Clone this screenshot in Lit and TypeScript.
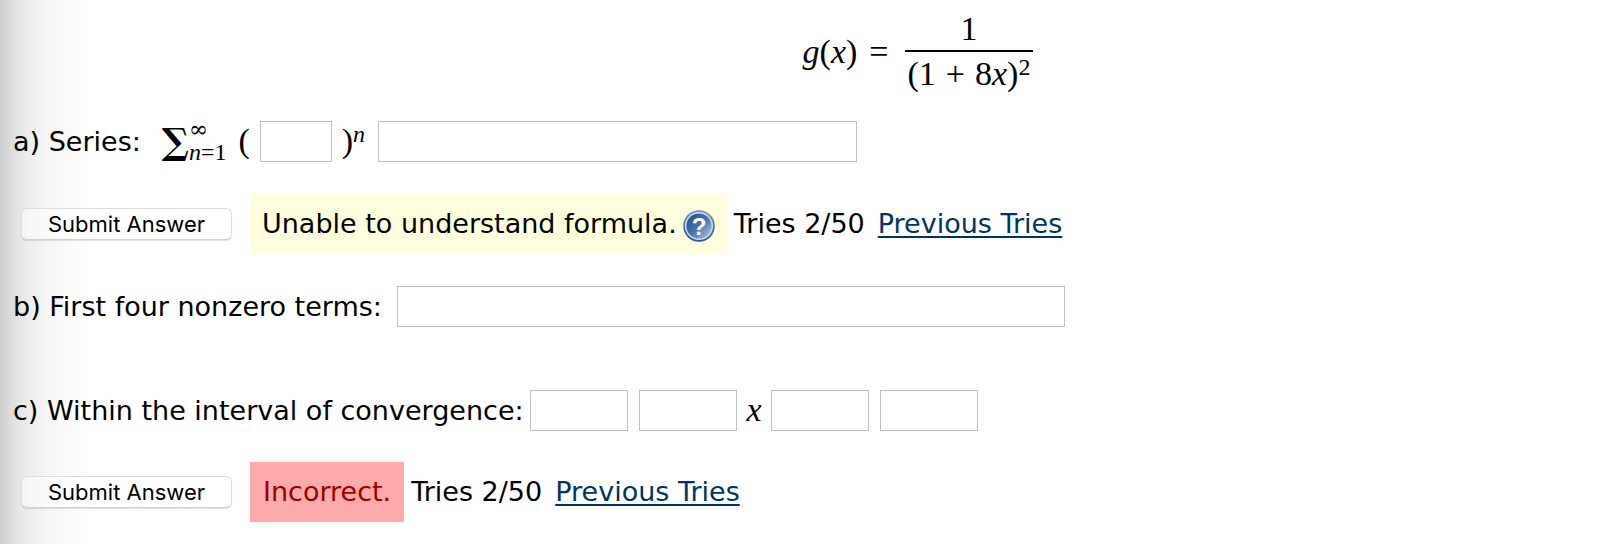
import { LitElement, html, css } from "lit";
import { customElement, property } from "lit/decorators.js";

@customElement("help-icon")
class HelpIcon extends LitElement {
  static styles = css`
    :host { display: block; }
    .link { display: block; width: 32px; height: 32px; }
    .mark { font: bold 24px "Liberation Sans", sans-serif; fill: #fff; text-anchor: middle; }
  `;
  render() {
    return html`<a class="link" href="#help" aria-label="Help">
      <svg width="32" height="32" viewBox="0 0 32 32" aria-hidden="true">
        <defs>
          <linearGradient id="disc" x1="0" y1="0" x2="1" y2="1">
            <stop offset="0.15" stop-color="#2a5596" />
            <stop offset="0.5" stop-color="#4a73b0" />
            <stop offset="0.9" stop-color="#9db9de" />
          </linearGradient>
          <linearGradient id="rim" x1="0" y1="0" x2="0" y2="1">
            <stop offset="0" stop-color="#7690b8" />
            <stop offset="1" stop-color="#2f5797" />
          </linearGradient>
        </defs>
        <circle cx="16" cy="16" r="15.8" fill="url(#rim)" />
        <circle cx="16" cy="16" r="14" fill="#d3dfef" />
        <circle cx="16" cy="16" r="12.6" fill="url(#disc)" />
        <text class="mark" x="16" y="24.5">?</text>
      </svg>
    </a>`;
  }
}

@customElement("answer-status")
class AnswerStatus extends LitElement {
  @property() kind = "warning";
  @property() message = "";

  static styles = css`
    :host { display: flex; align-items: center; }
    .submit {
      width: 211px;
      height: 32px;
      margin: 0 18px 0 8px;
      padding: 0;
      border: 1px solid #dcdcdc;
      border-bottom-color: #cfcfcf;
      border-radius: 6px;
      background: rgba(255, 255, 255, 0.5);
      box-shadow: 0 1px 1px rgba(0, 0, 0, 0.12);
      color: #000;
      font: 22px/28px Inter, sans-serif;
    }
    .message {
      box-sizing: border-box;
      display: flex;
      align-items: center;
      gap: 6px;
      height: 60px;
      padding: 0 12px;
      margin-right: 7px;
    }
    .warning { background: #ffffdd; }
    .warning help-icon { padding-top: 4px; }
    .incorrect { padding: 0 13px; background: #ffaaaa; color: #990000; }
    .previous {
      margin-left: 13px;
      color: #003366;
      text-decoration-thickness: 2px;
      text-underline-offset: 3px;
    }
  `;
  render() {
    return html`
      <button class="submit" type="button">Submit Answer</button>
      <div class="message ${this.kind}" role="status">
        <span>${this.message}</span>
        ${this.kind === "warning" ? html`<help-icon></help-icon>` : null}
      </div>
      <span>Tries 2/50</span>
      <a class="previous" href="#tries">Previous Tries</a>
    `;
  }
}

@customElement("app-root")
class AppRoot extends LitElement {
  static styles = css`
    :host {
      display: block;
      min-height: 100vh;
      box-sizing: border-box;
      padding: 8px 13px 22px;
      background: linear-gradient(
        to right,
        #cfcfcf 0,
        #dedede 12px,
        #ececec 27px,
        #f7f7f7 50px,
        #fdfdfd 80px,
        #fff 90px
      ) #fff;
      color: #000;
      font: 27px/40px Verdana, "DejaVu Sans", sans-serif;
    }
    .formula {
      display: flex;
      justify-content: center;
      align-items: center;
      gap: 16px;
      padding-left: 212px;
      height: 88px;
    }
    .math { font-family: "Liberation Serif", serif; font-size: 34px; line-height: 40px; }
    .operator { margin: 0 10px; }
    .equals { margin-left: 12px; }
    .fraction { display: flex; flex-direction: column; align-items: stretch; text-align: center; }
    .numerator { line-height: 42px; border-bottom: 2px solid #000; }
    .denominator { padding: 0 3px; line-height: 44px; }
    .raised { font-size: 24px; line-height: 0; vertical-align: 10px; }
    .row { display: flex; align-items: center; height: 41px; }
    .row .math { line-height: 36px; padding-bottom: 2px; }
    .series { margin: 25px 0 32px; }
    .terms { margin: 32px 0 63px; }
    .interval { margin-bottom: 31px; }
    .sum { display: flex; align-items: center; margin: 0 12px 0 21px; }
    .sigma { font-family: "DejaVu Serif", serif; font-size: 36px; font-weight: bold; }
    .limits { display: flex; flex-direction: column; font-size: 24px; line-height: 24px; }
    .infinity { font-family: "DejaVu Serif", serif; font-size: 23px; line-height: 22px; }
    .field {
      box-sizing: border-box;
      height: 41px;
      padding: 0 8px;
      border: 1px solid #bfbfbf;
      border-radius: 0;
      background: #fff;
      font: inherit;
      color: inherit;
    }
    .base { width: 72px; margin: 0 10px; }
    .factor { width: 479px; margin-left: 13px; }
    .long { width: 668px; margin-left: 15px; }
    .short { width: 98px; margin-left: 11px; }
    .lower { margin-left: 6px; }
    .variable { margin: 0 -2px 0 10px; }
  `;
  render() {
    return html`
      <div class="formula math">
        <span><i>g</i>(<i>x</i>)<span class="equals">=</span></span>
        <span class="fraction">
          <span class="numerator">1</span>
          <span class="denominator">(1<span class="operator">+</span>8<i>x</i>)<span class="raised">2</span></span>
        </span>
      </div>
      <div class="row series">
        <label for="base">a) Series:</label>
        <span class="sum math">
          <span class="sigma">∑</span>
          <span class="limits"><span class="infinity">∞</span><span><i>n</i>=1</span></span>
        </span>
        <span class="math">(</span>
        <input class="field base" id="base" type="text" />
        <span class="math">)<i class="raised">n</i></span>
        <input class="field factor" type="text" aria-label="Series factor" />
      </div>
      <answer-status kind="warning" message="Unable to understand formula."></answer-status>
      <div class="row terms">
        <label for="terms">b) First four nonzero terms:</label>
        <input class="field long" id="terms" type="text" />
      </div>
      <div class="row interval">
        <label for="lower">c) Within the interval of convergence:</label>
        <input class="field short lower" id="lower" type="text" />
        <input class="field short" type="text" aria-label="Left relation" />
        <i class="math variable">x</i>
        <input class="field short" type="text" aria-label="Right relation" />
        <input class="field short" type="text" aria-label="Upper bound" />
      </div>
      <answer-status kind="incorrect" message="Incorrect."></answer-status>
    `;
  }
}
